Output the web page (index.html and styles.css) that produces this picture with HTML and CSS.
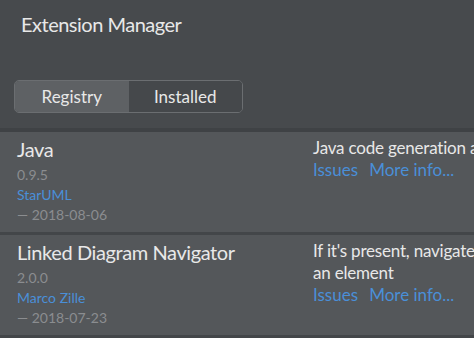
FILE: index.html
```html
<!DOCTYPE html>
<html lang="en">
<head>
    <meta charset="UTF-8">
    <meta name="viewport" content="width=device-width, initial-scale=1.0">
    <title>Extension Manager</title>
    <link rel="stylesheet" href="styles.css">
</head>
<body>
<div class="dialog">
    <h1 class="title">Extension Manager</h1>
    <div class="tabs">
        <button class="tab active">Registry</button>
        <button class="tab">Installed</button>
    </div>
    <div class="list">
        <div class="item">
            <div class="info">
                <div class="name">Java</div>
                <div class="version">0.9.5</div>
                <a class="author" href="#">StarUML</a>
                <div class="date">— 2018-08-06</div>
            </div>
            <div class="details">
                <div class="desc">Java code generation and reverse engineering</div>
                <div class="links">
                    <a href="#">Issues</a>
                    <a href="#">More info...</a>
                </div>
            </div>
        </div>
        <div class="item">
            <div class="info">
                <div class="name">Linked Diagram Navigator</div>
                <div class="version">2.0.0</div>
                <a class="author" href="#">Marco Zille</a>
                <div class="date">— 2018-07-23</div>
            </div>
            <div class="details">
                <div class="desc">If it's present, navigate to the linked diagram of an element</div>
                <div class="links">
                    <a href="#">Issues</a>
                    <a href="#">More info...</a>
                </div>
            </div>
        </div>
    </div>
</div>
</body>
</html>
```
FILE: styles.css
```css
body {
    margin: 0;
    background-color: #474a4d;
    font-family: "Source Sans Pro", Lato, "Noto Sans", sans-serif;
    color: #e8e8e8;
    overflow: hidden;
}

.dialog {
    width: 760px;
}

.title {
    margin: 0;
    padding: 10px 21px 0;
    height: 70px;
    font-size: 20px;
    font-weight: normal;
    line-height: 28px;
    letter-spacing: -0.5px;
}

.tabs {
    display: flex;
    margin-left: 14px;
    width: 229px;
    height: 33px;
    border: 1px solid #6b6e71;
    border-radius: 5px;
    overflow: hidden;
    box-sizing: border-box;
}

.tab {
    flex: 1;
    border: none;
    background-color: #45484b;
    color: #e8e8e8;
    font-family: inherit;
    font-size: 17px;
    padding: 0;
}

.tab.active {
    background-color: #5e6164;
}

.list {
    margin-top: 15px;
    border-top: 4px solid #3f4245;
}

.item {
    display: flex;
    height: 100px;
    background-color: #54575a;
    border-bottom: 3px solid #434649;
}

.info {
    width: 313px;
    padding: 4px 0 0 17px;
    box-sizing: border-box;
}

.name {
    font-size: 20px;
    line-height: 26px;
    letter-spacing: -0.4px;
    margin-bottom: 3px;
}

.version,
.date {
    color: #8b8d90;
    font-size: 14px;
    line-height: 20px;
}

.author {
    display: block;
    color: #4a8fd8;
    font-size: 14px;
    line-height: 20px;
    text-decoration: none;
}

.details {
    width: 354px;
    padding-top: 5px;
}

.desc {
    font-size: 17px;
    line-height: 22px;
    letter-spacing: -0.2px;
}

.links a {
    color: #4a8fd8;
    font-size: 17px;
    line-height: 22px;
    text-decoration: none;
    margin-right: 7px;
}
```
